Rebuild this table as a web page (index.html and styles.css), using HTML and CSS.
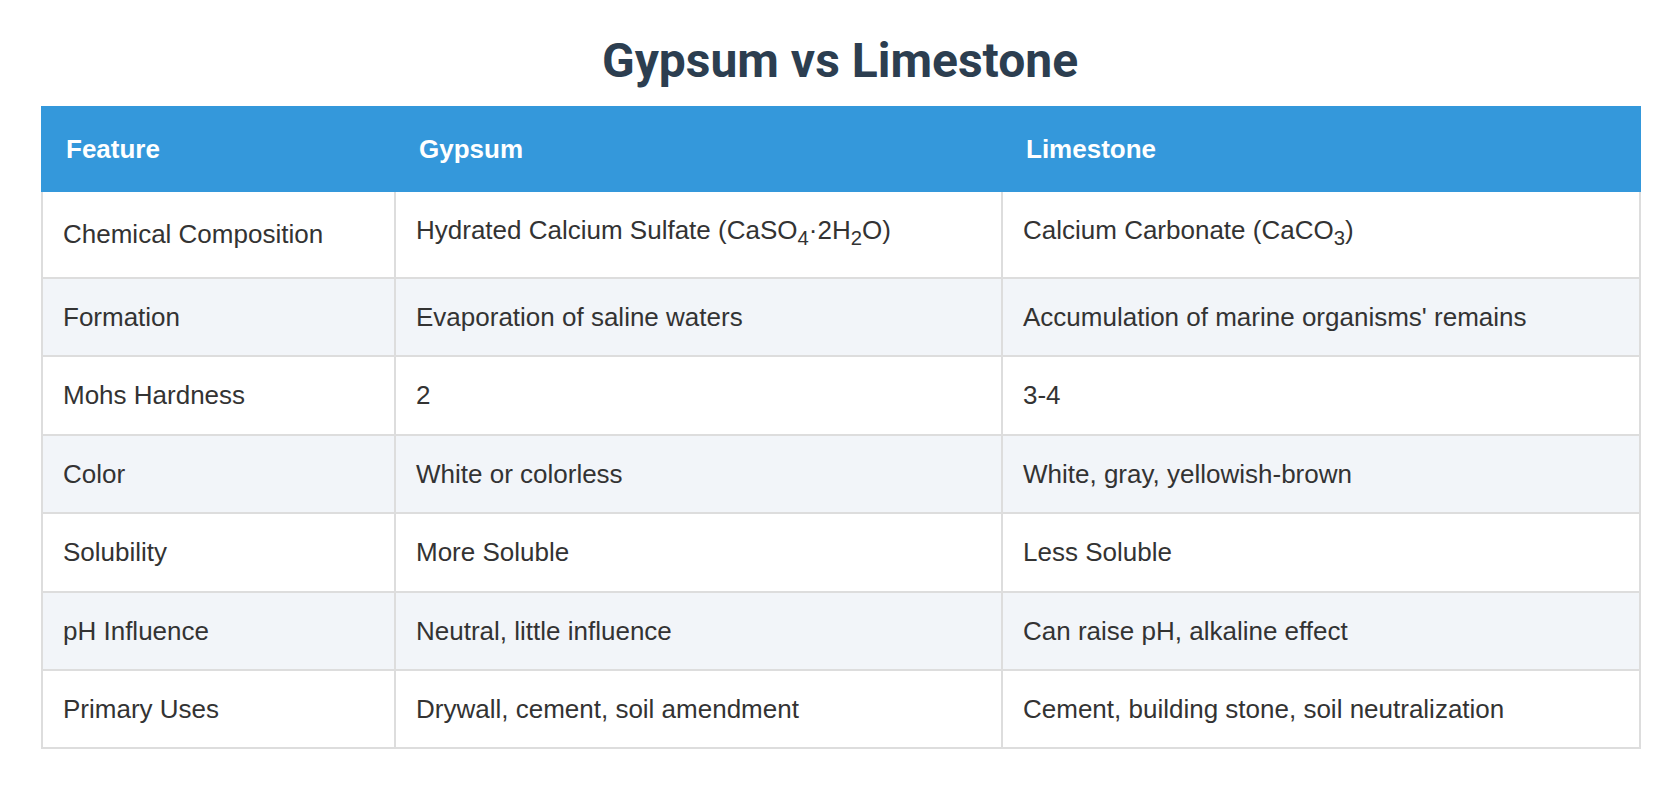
FILE: index.html
```html
<!DOCTYPE html>
<html lang="en">
<head>
<meta charset="utf-8">
<title>Gypsum vs Limestone</title>
<link rel="stylesheet" href="styles.css">
</head>
<body>
<main class="page">
  <h1 class="title">Gypsum vs Limestone</h1>
  <table class="compare">
    <colgroup>
      <col class="col-feature">
      <col class="col-gypsum">
      <col class="col-limestone">
    </colgroup>
    <thead>
      <tr>
        <th>Feature</th>
        <th>Gypsum</th>
        <th>Limestone</th>
      </tr>
    </thead>
    <tbody>
      <tr>
        <td>Chemical Composition</td>
        <td>Hydrated Calcium Sulfate (CaSO<sub>4</sub>·2H<sub>2</sub>O)</td>
        <td>Calcium Carbonate (CaCO<sub>3</sub>)</td>
      </tr>
      <tr>
        <td>Formation</td>
        <td>Evaporation of saline waters</td>
        <td>Accumulation of marine organisms' remains</td>
      </tr>
      <tr>
        <td>Mohs Hardness</td>
        <td>2</td>
        <td>3-4</td>
      </tr>
      <tr>
        <td>Color</td>
        <td>White or colorless</td>
        <td>White, gray, yellowish-brown</td>
      </tr>
      <tr>
        <td>Solubility</td>
        <td>More Soluble</td>
        <td>Less Soluble</td>
      </tr>
      <tr>
        <td>pH Influence</td>
        <td>Neutral, little influence</td>
        <td>Can raise pH, alkaline effect</td>
      </tr>
      <tr>
        <td>Primary Uses</td>
        <td>Drywall, cement, soil amendment</td>
        <td>Cement, building stone, soil neutralization</td>
      </tr>
    </tbody>
  </table>
</main>
</body>
</html>
```

FILE: styles.css
```css
html, body {
  margin: 0;
  padding: 0;
  background: #ffffff;
}

body {
  font-family: "Liberation Sans", Arial, sans-serif;
  color: #333333;
}

.page {
  padding: 33px 41px 0;
}

.title {
  margin: 0 0 17px;
  font-family: Roboto, "Liberation Sans", sans-serif;
  font-weight: 700;
  font-size: 48px;
  line-height: 56px;
  color: #2c3e50;
  text-align: center;
}

.compare {
  width: 1598px;
  border-collapse: collapse;
  table-layout: fixed;
  font-size: 26px;
  line-height: 28.4px;
}

.col-feature { width: 353px; }
.col-gypsum { width: 607px; }
.col-limestone { width: 638px; }

.compare th {
  background: #3498db;
  color: #ffffff;
  font-weight: 700;
  text-align: left;
  padding: 27px 23px;
  border: 2px solid #3498db;
  border-right: 1px solid #5dade6;
}

.compare th:last-child {
  border-right: 2px solid #3498db;
}

.compare td {
  padding: 24px 20px;
  border: 2px solid #dddddd;
  text-align: left;
}

.compare tbody tr:nth-child(even) td {
  background: #f2f5f9;
}

.compare sub {
  font-size: 0.78em;
  vertical-align: -0.3em;
}
```
